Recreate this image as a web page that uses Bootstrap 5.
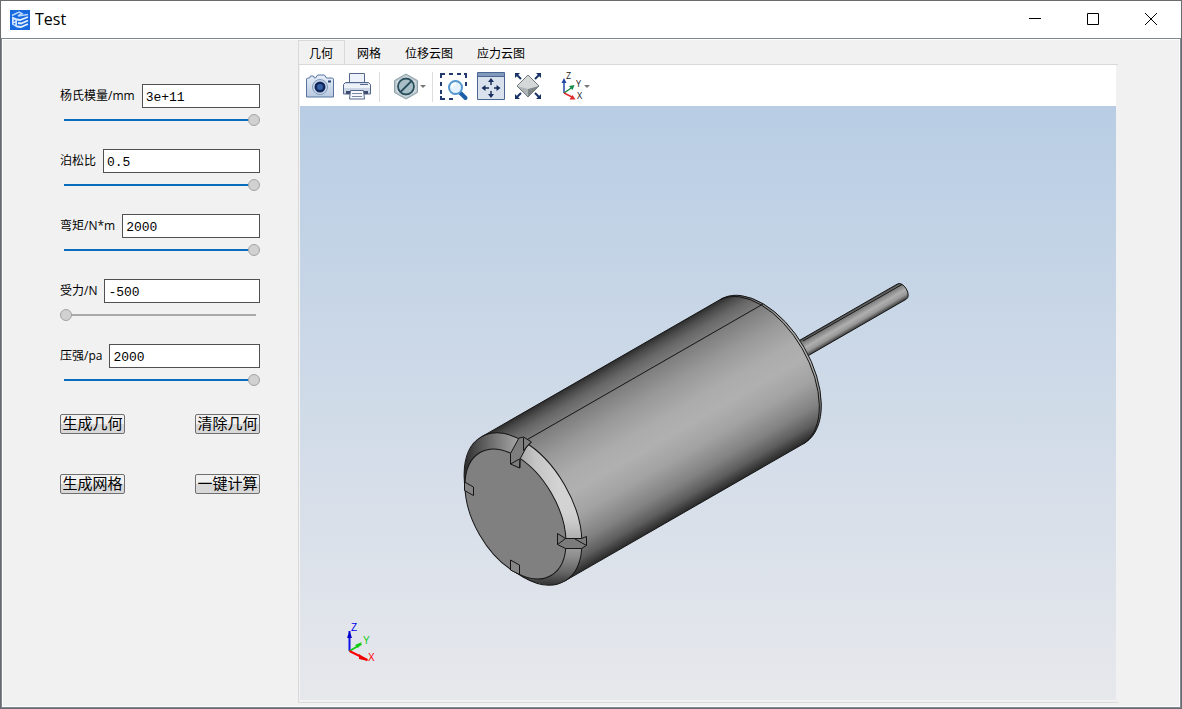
<!DOCTYPE html>
<html lang="zh-CN">
<head>
<meta charset="utf-8">
<meta name="viewport" content="width=device-width, initial-scale=1">
<title>Test</title>
<link href="https://cdn.jsdelivr.net/npm/bootstrap@5.3.0/dist/css/bootstrap.min.css" rel="stylesheet">
<style>
  body { font-family: "Open Sans", "Noto Sans CJK SC", sans-serif; font-size: 12px; line-height: 16px; color: #000; background: #f0f0f0; }
  button { color: #000; }
  .app-window { border: 1px solid #6b6b6f; }
  .title-bar { height: 38px; padding: 0 1px 0 9px; border-bottom: 1px solid #808790; }
  .title-text { font-size: 16px; line-height: 24px; font-weight: 400; padding: 0 0 2px 5px; }
  .win-btn { width: 58px; height: 36px; }
  .client { border: 1px solid #808790; border-top: 0; box-shadow: inset 0 0 0 1px #fff; padding: 1px; background: #f1f1f1; }
  .params { flex: 0 0 295px; padding: 44px 38px 16px 57px; }
  .param-set { margin-bottom: 17px; }
  .param-input { height: 24px; padding: 2px 4px 0 3px; border: 1px solid #505052; border-radius: 0; font: 13px/20px "Liberation Mono", monospace; color: #000; }
  .param-set label { margin-right: 7px; white-space: nowrap; }
  .slider { appearance: none; display: block; width: 100%; height: 24px; margin: 0; background: linear-gradient(#a9a9a9, #a9a9a9) center / calc(100% - 8px) 2px no-repeat; }
  .slider.at-max { background-image: linear-gradient(#0a6cbd, #0a6cbd); }
  .slider::-webkit-slider-thumb { appearance: none; width: 12px; height: 12px; border: 1px solid #a3a3a3; border-radius: 50%; background: #d1d1d1; }
  .slider::-moz-range-thumb { width: 10px; height: 10px; border: 1px solid #a3a3a3; border-radius: 50%; background: #d1d1d1; }
  .actions { row-gap: 40px; margin-top: 22px; }
  .act-btn { width: 65px; height: 20px; padding: 0 0 2px; border: 1px solid #707070; border-radius: 2px; background: linear-gradient(#f1f1f1 0 50%, #d8d8d8 50% 100%); font: 15px/16px "Noto Sans CJK SC", sans-serif; white-space: nowrap; }
  .viewer { margin: 0 61px 3px 0; }
  .view-tabs { height: 25px; border-bottom: 1px solid #d9d9d9; font-family: "Noto Sans CJK SC", sans-serif; }
  .view-tabs .nav-link { padding: 5px 12px 3px; margin: 0; color: #000; border-radius: 0; height: 24px; border: 0; }
  .view-tabs .nav-link.active { background: #f1f1f1; border: 1px solid #d9d9d9; border-bottom: 0; padding: 4px 11px 3px 10px; color: #000; }
  .pane { border: 1px solid #d9d9d9; border-width: 0 0 1px 1px; padding: 0 2px 2px 1px; }
  .tools { height: 41px; padding: 2px 0 0 6px; background: #fff; }
  .tool-set { gap: 9px; }
  .tool-sep { width: 1px; height: 30px; margin: 0 8px; background: #dcdcdc; }
  .tool { padding: 0; border: 0; background: none; display: flex; align-items: center; }
  .tool svg { overflow: visible; }
  .scene { background: linear-gradient(#b8cde4, #e7e8ec); min-height: 240px; }
  .scene svg { position: absolute; inset: 0; width: 100%; height: 100%; }
</style>
</head>
<body>
<div class="app-window d-flex flex-column min-vh-100">
  <header class="title-bar d-flex align-items-center bg-white">
    <svg width="20" height="20" viewBox="0 0 20 20" aria-hidden="true">
      <rect width="20" height="20" fill="#1769e0"/>
      <path d="M2 5.500L9 2l3 1.500L8 6l10-1.500" fill="none" stroke="#b9d6ff" stroke-width="1.500"/>
      <path d="M2 6.500l5 2v9l-5-3z" fill="#cfe2ff"/>
      <path d="M4.500 10v1.500M4.500 13v1.500" stroke="#1769e0" stroke-width="1.500"/>
      <path d="M7 9.500l3 .5 8-3M8 13l3 .5 7-3M7 16.500l4 .5 7-3" fill="none" stroke="#e3efff" stroke-width="1.800"/>
    </svg>
    <h1 class="title-text mb-0 me-auto">Test</h1>
    <button class="win-btn btn d-flex align-items-center justify-content-center align-self-start p-0 border-0 rounded-0" type="button" aria-label="最小化"><svg width="12" height="12"><path d="M0 5.500h12" stroke="#000"/></svg></button>
    <button class="win-btn btn d-flex align-items-center justify-content-center align-self-start p-0 border-0 rounded-0" type="button" aria-label="最大化"><svg width="12" height="12"><path d="M.5.5h11v11H.5z" fill="none" stroke="#000"/></svg></button>
    <button class="win-btn btn d-flex align-items-center justify-content-center align-self-start p-0 border-0 rounded-0" type="button" aria-label="关闭"><svg width="12" height="12"><path d="M0 0l12 12M12 0L0 12" stroke="#000"/></svg></button>
  </header>

  <main class="client d-flex flex-grow-1">
    <form class="params">
      <div class="param-set">
        <div class="d-flex align-items-center"><label for="young">杨氏模量/mm</label><input id="young" class="param-input form-control" type="text" value="3e+11"></div>
        <input class="slider at-max" type="range" value="100" aria-label="杨氏模量">
      </div>
      <div class="param-set">
        <div class="d-flex align-items-center"><label for="poisson">泊松比</label><input id="poisson" class="param-input form-control" type="text" value="0.5"></div>
        <input class="slider at-max" type="range" value="100" aria-label="泊松比">
      </div>
      <div class="param-set">
        <div class="d-flex align-items-center"><label for="moment">弯矩/N*m</label><input id="moment" class="param-input form-control" type="text" value="2000"></div>
        <input class="slider at-max" type="range" value="100" aria-label="弯矩">
      </div>
      <div class="param-set">
        <div class="d-flex align-items-center"><label for="force">受力/N</label><input id="force" class="param-input form-control" type="text" value="-500"></div>
        <input class="slider" type="range" value="0" aria-label="受力">
      </div>
      <div class="param-set mb-0">
        <div class="d-flex align-items-center"><label for="pressure">压强/pa</label><input id="pressure" class="param-input form-control" type="text" value="2000"></div>
        <input class="slider at-max" type="range" value="100" aria-label="压强">
      </div>
      <div class="actions d-flex flex-column">
        <div class="d-flex justify-content-between">
          <button type="button" class="act-btn">生成几何</button>
          <button type="button" class="act-btn">清除几何</button>
        </div>
        <div class="d-flex justify-content-between">
          <button type="button" class="act-btn">生成网格</button>
          <button type="button" class="act-btn">一键计算</button>
        </div>
      </div>
    </form>

    <section class="viewer d-flex flex-column flex-grow-1">
      <nav class="view-tabs nav nav-tabs flex-nowrap">
        <a class="nav-link active" href="#geometry" aria-current="page">几何</a>
        <a class="nav-link" href="#mesh">网格</a>
        <a class="nav-link" href="#displacement">位移云图</a>
        <a class="nav-link" href="#stress">应力云图</a>
      </nav>
      <div class="pane d-flex flex-column flex-grow-1" id="geometry">
        <div class="tools d-flex align-items-center">
          <div class="tool-set d-flex">
            <button class="tool" type="button" aria-label="截图">
              <svg width="28" height="28" viewBox="0 0 28 28">
                <defs><linearGradient id="metal" x2="0" y2="1"><stop stop-color="#e7eef8"/><stop offset="1" stop-color="#b9c9e0"/></linearGradient></defs>
                <path d="M.5 6l1-1h2l1-2h3l1 2h1l2-3h7l2 3h6l1 1v18H.5z" fill="url(#metal)" stroke="#56749f" stroke-linejoin="round"/>
                <circle cx="14" cy="14" r="7.500" fill="#c9d8ea" stroke="#8298b8"/><circle cx="14" cy="14" r="5.500" fill="#13285a"/><circle cx="14" cy="14" r="3" fill="#3560a5"/>
                <path d="M22 8.500h3" stroke="#263f72" stroke-width="2"/>
              </svg>
            </button>
            <button class="tool" type="button" aria-label="打印">
              <svg width="28" height="28" viewBox="0 0 28 28">
                <path d="M6.500.5h15V11h-15z" fill="#edf2fa" stroke="#53668c"/>
                <path d="M.5 11.500l2-2h23l2 2V21h-27z" fill="#cbd5e6" stroke="#53668c"/><path d="M1 11h26v4H1z" fill="#edf2f9"/>
                <path d="M17 11.500h8" stroke="#56688c"/><path d="M3 18h22v3H3z" fill="#3e4b6d"/>
                <path d="M7.500 17.500h13l1 8.500h-15z" fill="#f6f8fc" stroke="#53668c"/><path d="M9 20.500h10M9 23.500h10" stroke="#7a879e"/>
              </svg>
            </button>
          </div>
          <span class="tool-sep"></span>
          <button class="tool" type="button" aria-label="选择过滤">
            <svg width="30" height="28" viewBox="0 0 30 28">
              <path d="M18 1l11.500 6.500v12L18 26 6.500 19.500v-12z" fill="#bac6cb" stroke="#8ea2ab"/><path d="M18 3l9.500 5.500v10L18 24l-9.500-5.500v-10z" fill="#d8e2e6"/>
              <circle cx="18" cy="13.500" r="8" fill="#a9bfc7" stroke="#294e5d" stroke-width="1.800"/><path d="M12.500 19l11-11" stroke="#294e5d" stroke-width="1.800"/>
            </svg>
            <svg width="6" height="6"><path d="M2 1h6L5 4z" fill="#777"/></svg>
          </button>
          <span class="tool-sep"></span>
          <div class="tool-set d-flex">
            <button class="tool" type="button" aria-label="框选缩放">
              <svg width="28" height="28" viewBox="1 0 28 28">
                <path d="M1 5V1h4M9 1h4M17 1h4M24 1h2v4M1 9v4M1 17v4M1 23v3h4M9 26h4M26 9v4" fill="none" stroke="#223a70" stroke-width="2"/>
                <path d="M20.500 20l5 5" stroke="#1b5fa8" stroke-width="4" stroke-linecap="round"/>
                <circle cx="15.500" cy="14.500" r="6.500" fill="#e4f3ff" stroke="#5598cf" stroke-width="2"/><path d="M12 14.500q0-4 4-4" fill="none" stroke="#fff" stroke-width="2"/>
              </svg>
            </button>
            <button class="tool" type="button" aria-label="适应窗口">
              <svg width="28" height="28" viewBox="1 0 28 28">
                <path d="M.5-.5h27v27H.5z" fill="#d8e1ec" stroke="#4b6790"/><path d="M1 0h26v3H1z" fill="#8199bd"/><path d="M1 3.500h26" stroke="#4b6790"/>
                <path d="M14 8v4M14 18v4M8 15h4M17 15h4" stroke="#172d5c" stroke-width="1.500"/>
                <path d="M14 5l3 4h-6zM14 25l3-4h-6zM4.500 15l4-3v6zM23.500 15l-4-3v6z" fill="#172d5c"/>
              </svg>
            </button>
            <button class="tool" type="button" aria-label="显示全部">
              <svg width="28" height="28" viewBox="1 0 28 28">
                <path d="M3 2l4 4M25 2l-4 4M3 24l4-4M25 24l-4-4" stroke="#1b3467" stroke-width="2"/>
                <path d="M1 0h5L1 5zM27 0v5l-5-5zM1 26v-5l5 5zM27 26h-5l5-5z" fill="#1b3467"/>
                <path d="M14 2l11 11-11 11L3 13z" fill="#d4d8d9"/><path d="M3 13l11 3V24z" fill="#aeb3b5"/><path d="M25 13l-11 3V24z" fill="#7f878a"/>
                <path d="M14 2l11 11-11 11L3 13z" fill="none" stroke="#72797c"/>
              </svg>
            </button>
            <button class="tool" type="button" aria-label="视图方向">
              <svg width="32" height="28" viewBox="0 0 32 28" font-family="Open Sans, sans-serif" font-size="9" fill="#222">
                <path d="M12 20V9" stroke="#2347a5" stroke-width="1.500"/><path d="M12 5l2.500 5h-5z" fill="#2347a5"/>
                <path d="M12 20l8-5.500" stroke="#138a43" stroke-width="1.500"/><path d="M22.500 12l-2 5-3.500-4z" fill="#138a43"/>
                <path d="M12 20l9 4.500" stroke="#e22b2b" stroke-width="1.500"/><path d="M23.500 26.500h-6l3-4.500z" fill="#e22b2b"/>
                <text x="14" y="6">Z</text><text x="24" y="14">Y</text><text x="25" y="26">X</text>
              </svg>
              <svg width="6" height="6"><path d="M0 1h6L3 4z" fill="#777"/></svg>
            </button>
          </div>
        </div>
        <div class="scene position-relative flex-grow-1">
          <svg viewBox="300 106 816 594" preserveAspectRatio="xMidYMid meet" role="img" aria-label="圆柱体模型">
            <defs>
              <linearGradient id="body" gradientUnits="userSpaceOnUse" x1="481.400" y1="436.900" x2="564.600" y2="581.100">
                <stop stop-color="#2c2c2c"/><stop offset=".04" stop-color="#4c4c4c"/><stop offset=".09" stop-color="#676767"/><stop offset=".17" stop-color="#808080"/><stop offset=".3" stop-color="#999"/><stop offset=".45" stop-color="#acacac"/><stop offset=".56" stop-color="#b0b0b0"/><stop offset=".7" stop-color="#a2a2a2"/><stop offset=".84" stop-color="#828282"/><stop offset=".93" stop-color="#5d5d5d"/><stop offset="1" stop-color="#2a2a2a"/>
              </linearGradient>
              <linearGradient id="rod" gradientUnits="userSpaceOnUse" x1="897.600" y1="283.900" x2="906.400" y2="299.100">
                <stop stop-color="#444"/><stop offset=".14" stop-color="#777"/><stop offset=".5" stop-color="#afafaf"/><stop offset=".75" stop-color="#979797"/><stop offset="1" stop-color="#3a3a3a"/>
              </linearGradient>
              <linearGradient id="bevel" gradientUnits="userSpaceOnUse" x1="464" y1="0" x2="582" y2="0">
                <stop stop-color="#2c2c2c"/><stop offset=".12" stop-color="#505050"/><stop offset=".3" stop-color="#808080"/><stop offset=".45" stop-color="#a2a2a2"/><stop offset=".6" stop-color="#c4c4c4"/><stop offset=".8" stop-color="#d3d3d3"/>
              </linearGradient>
              <linearGradient id="bevelLow" gradientUnits="userSpaceOnUse" x1="0" y1="505" x2="0" y2="585">
                <stop stop-color="#d3d3d3" stop-opacity="0"/><stop offset=".35" stop-color="#b8b8b8"/><stop offset=".65" stop-color="#8c8c8c"/><stop offset=".85" stop-color="#636363"/><stop offset="1" stop-color="#333"/>
              </linearGradient>
              <clipPath id="rimClip"><ellipse cx="523" cy="509" rx="83.300" ry="48.100" transform="rotate(60 523 509)"/></clipPath>
            </defs>
            <path d="M797.600 341.500L897.600 283.900A8.750 5 60 0 1 906.400 299.100L806.400 356.700z" fill="url(#rod)" stroke="#151515"/>
            <path d="M803 341L902 284.500" stroke="#151515"/>
            <path d="M481.400 436.900L722.400 298.300A83.300 48.100 60 0 1 805.600 442.500L564.600 581.100z" fill="url(#body)" stroke="#151515"/>
            <path d="M720.400 299.500A83.300 48.100 60 0 1 803.600 443.700" fill="none" stroke="#151515"/>
            <path d="M523 442L763 304" stroke="#151515"/>
            <g clip-path="url(#rimClip)"><path d="M460 430h126v160H460z" fill="url(#bevel)"/><path d="M520 505h66v85h-66z" fill="url(#bevelLow)"/></g>
            <ellipse cx="523" cy="509" rx="83.300" ry="48.100" transform="rotate(60 523 509)" fill="none" stroke="#151515"/>
            <ellipse cx="515.500" cy="514" rx="71" ry="41.500" transform="rotate(60 515.500 514)" fill="#808080" stroke="#151515"/>
            <g stroke="#151515" stroke-linejoin="round">
              <path d="M510.500 453.500L519 438l4.500-1 8 5-5 5-6.500 12-.5 9-9-4z" fill="#7d7d7d"/>
              <path d="M523.500 437.500v13l7-8M510.500 464l9-5M520 468v-8.500" fill="none"/>
              <path d="M464.500 482l9 5v8.500l-9-5z" fill="#858585"/>
              <path d="M510.500 560l9 5v9.500l-9-4.500z" fill="#858585"/>
              <path d="M557.500 533.500l8 5h16l5-2v9l-5 3h-16l-8-4z" fill="#7b7b7b"/>
              <path d="M557.500 544.500l8-6M575 539l11.500 6.500" fill="none"/>
            </g>
            <g fill="none" stroke-width="2">
              <path d="M349.500 651v-20" stroke="#1010e8"/><path d="M349.500 651l12-7" stroke="#11cc11"/><path d="M349.500 651l18 9" stroke="#f00"/>
            </g>
            <path d="M347 638l2.500-7 2.500 7z" fill="#0000c8"/><path d="M355 645l7-3-4 6z" fill="#11cc11"/><path d="M359 654l9 7-9-2z" fill="#e00"/>
            <g font-family="Liberation Sans, sans-serif" font-size="10"><text x="351" y="631" fill="#00e">Z</text><text x="363" y="644" fill="#1c1">Y</text><text x="368" y="661" fill="#f00">X</text></g>
          </svg>
        </div>
      </div>
    </section>
  </main>
</div>
<script src="https://cdn.jsdelivr.net/npm/bootstrap@5.3.0/dist/js/bootstrap.bundle.min.js"></script>
</body>
</html>
